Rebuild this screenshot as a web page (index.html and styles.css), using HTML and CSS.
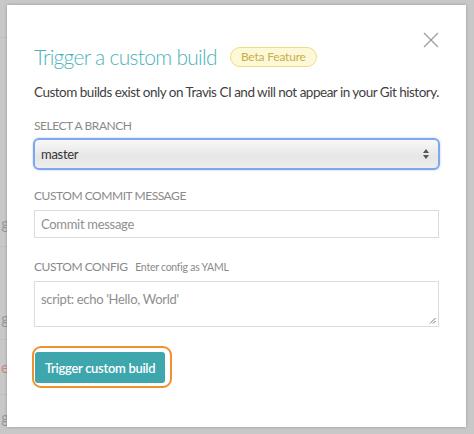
FILE: index.html
```html
<!DOCTYPE html>
<html>
<head>
<meta charset="utf-8">
<link rel="stylesheet" href="styles.css">
</head>
<body>
<div class="backdrop">
  <div class="bg-row bg-top"></div>
  <div class="bg-row bg-r1"><span class="bg-text">g</span></div>
  <div class="bg-row bg-r2"><span class="bg-text">g</span></div>
  <div class="bg-row bg-r3"><span class="bg-text bg-red">e</span></div>
  <div class="bg-row bg-r4"><span class="bg-text">g</span></div>
</div>
<div class="modal">
  <button class="close" aria-label="Close">
    <svg width="16" height="16" viewBox="0 0 16 16"><path d="M1 1 L15 15 M15 1 L1 15" stroke="#9a9a9a" stroke-width="1.2" fill="none"/></svg>
  </button>
  <div class="title-row">
    <h1 class="title">Trigger a custom build</h1>
    <span class="badge">Beta Feature</span>
  </div>
  <p class="desc">Custom builds exist only on Travis CI and will not appear in your Git history.</p>
  <div class="field field-branch">
    <label class="label">Select a branch</label>
    <div class="select">
      <span class="select-value">master</span>
      <svg class="arrows" width="8" height="12" viewBox="0 0 8 12"><path d="M4 1 L7 5 L1 5 Z M4 11 L7 7 L1 7 Z" fill="#555"/></svg>
    </div>
  </div>
  <div class="field field-message">
    <label class="label">Custom commit message</label>
    <div class="input"><span class="placeholder">Commit message</span></div>
  </div>
  <div class="field field-config">
    <label class="label">Custom config <span class="hint">Enter config as YAML</span></label>
    <div class="textarea">
      <span class="placeholder">script: echo 'Hello, World'</span>
      <svg class="grip" width="7" height="7" viewBox="0 0 7 7"><path d="M6.5 1 L1 6.5 M6.5 4 L4 6.5" stroke="#777" stroke-width="1" fill="none"/></svg>
    </div>
  </div>
  <div class="actions">
    <span class="focus-ring"><button class="btn">Trigger custom build</button></span>
  </div>
</div>
</body>
</html>
```

FILE: styles.css
```css
* { box-sizing: border-box; }
html, body { margin: 0; padding: 0; }
body {
  width: 474px;
  height: 434px;
  background: #c8c8c8;
  font-family: "Lato", "Open Sans", sans-serif;
  position: relative;
  overflow: hidden;
}
.backdrop {
  display: flex;
  flex-direction: column;
  width: 7px;
  overflow: hidden;
}
.bg-row {
  display: flex;
  justify-content: flex-end;
  align-items: flex-start;
  font-family: "Lato", sans-serif;
  font-size: 15px;
  line-height: 18px;
  color: #9a9a9a;
  border-bottom: 1px solid #bfbfbf;
}
.bg-text { margin-right: -2px; }
.bg-red { color: #c98a8a; }
.bg-top { height: 38px; }
.bg-r1 { height: 209px; padding-top: 176px; }
.bg-r2 { height: 93px; padding-top: 62px; }
.bg-r3 { height: 55px; padding-top: 18px; }
.bg-r4 { height: 39px; padding-top: 13px; border-bottom: 0; }

.modal {
  position: absolute;
  left: 7px;
  top: 5px;
  width: 459px;
  height: 422px;
  background: #fff;
  box-shadow: 0 0 3px rgba(0,0,0,0.25);
  padding: 37px 27px 0 27px;
}
.close {
  position: absolute;
  right: 27px;
  top: 27px;
  border: 0;
  background: none;
  padding: 0;
  width: 16px;
  height: 16px;
}
.close svg { display: block; }
.title-row {
  display: flex;
  align-items: center;
  gap: 13px;
}
.title {
  margin: 0;
  font-size: 21px;
  letter-spacing: -0.7px;
  font-weight: 300;
  color: #4db3b8;
  line-height: 30px;
}
.badge {
  display: inline-block;
  font-size: 12px;
  letter-spacing: -0.2px;
  color: #c9ae45;
  background: #fdf9d8;
  border: 1px solid #eedd7e;
  border-radius: 11px;
  padding: 1px 10px;
  line-height: 16px;
}
.desc {
  margin: 10px 0 0 0;
  font-size: 13.5px;
  letter-spacing: -0.5px;
  color: #3f3f3f;
  line-height: 20px;
  white-space: nowrap;
}
.field-branch { margin-top: 16px; }
.field-message { margin-top: 18px; }
.field-config { margin-top: 21px; }
.label {
  display: block;
  font-size: 12px;
  letter-spacing: -0.45px;
  color: #8a8a8a;
  text-transform: uppercase;
  line-height: 16px;
  margin-bottom: 6px;
}
.hint {
  text-transform: none;
  font-size: 10.5px;
  letter-spacing: -0.25px;
  margin-left: 5px;
}
.select {
  display: flex;
  align-items: center;
  justify-content: space-between;
  height: 32px;
  margin: -2px -1px 0 -1px;
  padding: 0 8px 0 6px;
  border: 2px solid #7ea7ec;
  border-radius: 6px;
  background: linear-gradient(#f8f8f8, #e6e6e6 60%, #ededed);
  box-shadow: 0 0 2px rgba(80,130,230,0.5);
}
.select-value { font-size: 13px; letter-spacing: -0.3px; color: #333; }
.input {
  display: flex;
  align-items: center;
  height: 28px;
  border: 1px solid #dcdcdc;
  padding: 0 6px;
}
.placeholder { font-size: 13px; letter-spacing: -0.3px; color: #8f8f8f; }
.textarea {
  position: relative;
  height: 46px;
  border: 1px solid #dcdcdc;
  padding: 6px 6px;
}
.grip { position: absolute; right: 2px; bottom: 2px; }
.actions { margin-top: 19px; }
.focus-ring {
  display: inline-block;
  border: 2px solid #ef912c;
  border-radius: 9px;
  padding: 4px 5px 3px 1px;
  margin-left: -2px;
}
.btn {
  display: block;
  border: 0;
  border-radius: 3px;
  background: #3ea6ad;
  color: #fff;
  font-family: "Lato", sans-serif;
  font-size: 13px;
  letter-spacing: -0.3px;
  font-weight: 600;
  height: 31px;
  padding: 0 10px;
}
```
